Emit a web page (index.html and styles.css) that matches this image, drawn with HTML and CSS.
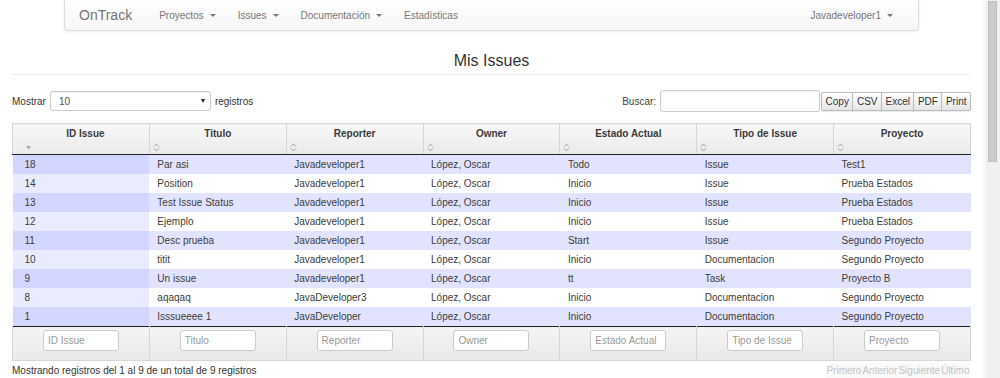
FILE: index.html
```html
<!DOCTYPE html>
<html lang="es">
<head>
<meta charset="utf-8">
<title>OnTrack - Mis Issues</title>
<link rel="stylesheet" href="styles.css">
</head>
<body>
<div class="page">
<nav class="navbar">
  <span class="brand">OnTrack</span>
  <ul class="nav">
    <li>Proyectos<span class="caret"></span></li>
    <li>Issues<span class="caret"></span></li>
    <li>Documentación<span class="caret"></span></li>
    <li>Estadísticas</li>
  </ul>
  <ul class="nav nav-right">
    <li>Javadeveloper1<span class="caret"></span></li>
  </ul>
</nav>

<main class="container">
  <h1 class="page-header">Mis Issues</h1>

  <div class="controls">
    <div class="length">
      <span>Mostrar</span>
      <div class="select"><span>10</span><span class="arrow"></span></div>
      <span>registros</span>
    </div>
    <div class="filter">
      <span>Buscar:</span>
      <input class="search" type="text">
      <div class="tools">
        <button>Copy</button><button>CSV</button><button>Excel</button><button>PDF</button><button>Print</button>
      </div>
    </div>
  </div>

  <table class="issues">
    <thead>
      <tr>
        <th class="first"><div class="th-title">ID Issue</div><div class="sort"><svg width="7" height="9" viewBox="0 0 7 9"><path d="M1.2 3.3 L5.8 3.3 L3.5 6.2 Z" fill="#999"/></svg></div></th>
        <th><div class="th-title">Titulo</div><div class="sort"><svg width="7" height="9" viewBox="0 0 7 9"><path d="M1 3.6 L3.5 1.1 L6 3.6 M1 5.4 L3.5 7.9 L6 5.4" fill="none" stroke="#9c9c9c" stroke-width="1"/></svg></div></th>
        <th><div class="th-title">Reporter</div><div class="sort"><svg width="7" height="9" viewBox="0 0 7 9"><path d="M1 3.6 L3.5 1.1 L6 3.6 M1 5.4 L3.5 7.9 L6 5.4" fill="none" stroke="#9c9c9c" stroke-width="1"/></svg></div></th>
        <th><div class="th-title">Owner</div><div class="sort"><svg width="7" height="9" viewBox="0 0 7 9"><path d="M1 3.6 L3.5 1.1 L6 3.6 M1 5.4 L3.5 7.9 L6 5.4" fill="none" stroke="#9c9c9c" stroke-width="1"/></svg></div></th>
        <th><div class="th-title">Estado Actual</div><div class="sort"><svg width="7" height="9" viewBox="0 0 7 9"><path d="M1 3.6 L3.5 1.1 L6 3.6 M1 5.4 L3.5 7.9 L6 5.4" fill="none" stroke="#9c9c9c" stroke-width="1"/></svg></div></th>
        <th><div class="th-title">Tipo de Issue</div><div class="sort"><svg width="7" height="9" viewBox="0 0 7 9"><path d="M1 3.6 L3.5 1.1 L6 3.6 M1 5.4 L3.5 7.9 L6 5.4" fill="none" stroke="#9c9c9c" stroke-width="1"/></svg></div></th>
        <th><div class="th-title">Proyecto</div><div class="sort"><svg width="7" height="9" viewBox="0 0 7 9"><path d="M1 3.6 L3.5 1.1 L6 3.6 M1 5.4 L3.5 7.9 L6 5.4" fill="none" stroke="#9c9c9c" stroke-width="1"/></svg></div></th>
      </tr>
    </thead>
    <tbody>
      <tr class="odd"><td>18</td><td>Par asi</td><td>Javadeveloper1</td><td>López, Oscar</td><td>Todo</td><td>Issue</td><td>Test1</td></tr>
      <tr class="even"><td>14</td><td>Position</td><td>Javadeveloper1</td><td>López, Oscar</td><td>Inicio</td><td>Issue</td><td>Prueba Estados</td></tr>
      <tr class="odd"><td>13</td><td>Test Issue Status</td><td>Javadeveloper1</td><td>López, Oscar</td><td>Inicio</td><td>Issue</td><td>Prueba Estados</td></tr>
      <tr class="even"><td>12</td><td>Ejemplo</td><td>Javadeveloper1</td><td>López, Oscar</td><td>Inicio</td><td>Issue</td><td>Prueba Estados</td></tr>
      <tr class="odd"><td>11</td><td>Desc prueba</td><td>Javadeveloper1</td><td>López, Oscar</td><td>Start</td><td>Issue</td><td>Segundo Proyecto</td></tr>
      <tr class="even"><td>10</td><td>titit</td><td>Javadeveloper1</td><td>López, Oscar</td><td>Inicio</td><td>Documentacion</td><td>Segundo Proyecto</td></tr>
      <tr class="odd"><td>9</td><td>Un issue</td><td>Javadeveloper1</td><td>López, Oscar</td><td>tt</td><td>Task</td><td>Proyecto B</td></tr>
      <tr class="even"><td>8</td><td>aqaqaq</td><td>JavaDeveloper3</td><td>López, Oscar</td><td>Inicio</td><td>Documentacion</td><td>Segundo Proyecto</td></tr>
      <tr class="odd"><td>1</td><td>Isssueeee 1</td><td>JavaDeveloper</td><td>López, Oscar</td><td>Inicio</td><td>Documentacion</td><td>Segundo Proyecto</td></tr>
    </tbody>
    <tfoot>
      <tr>
        <th><input class="col-filter" placeholder="ID Issue"></th>
        <th><input class="col-filter" placeholder="Titulo"></th>
        <th><input class="col-filter" placeholder="Reporter"></th>
        <th><input class="col-filter" placeholder="Owner"></th>
        <th><input class="col-filter" placeholder="Estado Actual"></th>
        <th><input class="col-filter" placeholder="Tipo de Issue"></th>
        <th><input class="col-filter" placeholder="Proyecto"></th>
      </tr>
    </tfoot>
  </table>

  <div class="info-row">
    <div class="info">Mostrando registros del 1 al 9 de un total de 9 registros</div>
    <div class="paginate"><span>Primero</span><span>Anterior</span><span>Siguiente</span><span>Último</span></div>
  </div>
</main>
</div>

<div class="scrollbar" aria-hidden="true"><div class="thumb"></div></div>
</body>
</html>
```

FILE: styles.css
```css
body {
  margin: 0;
  font-family: "Liberation Sans", Arial, sans-serif;
  font-size: 10px;
  color: #333;
  background: #fff;
}

.page {
  width: 983px;
}

/* Window scrollbar (page is scrolled to top) */
.scrollbar {
  position: fixed;
  top: 0;
  right: 0;
  width: 17px;
  height: 100%;
  background: linear-gradient(to right, #f7f7f7 0, #f7f7f7 3px, #f0f0f0 3px);
}
.thumb {
  box-sizing: border-box;
  margin: 1px 0 0 5px;
  width: 9px;
  height: 161px;
  background: #cbcbcb;
  border: 1px solid #bdbdbd;
}

/* Navbar */
.navbar {
  box-sizing: border-box;
  width: 855px;
  height: 31px;
  margin: 0 auto;
  padding: 0 14px;
  display: flex;
  align-items: center;
  background: linear-gradient(#ffffff, #f6f6f6);
  border: 1px solid #dcdcdc;
  border-top: 0;
  border-radius: 0 0 4px 4px;
  box-shadow: 0 1px 3px rgba(0, 0, 0, 0.07);
}
.brand {
  font-size: 14px;
  color: #777;
  margin-right: 16px;
}
.nav {
  list-style: none;
  margin: 0;
  padding: 0;
  display: flex;
  align-items: center;
}
.nav li {
  padding: 0 11px;
  color: #777;
  font-size: 10px;
  display: flex;
  align-items: center;
}
.nav-right {
  margin-left: auto;
}
.caret {
  display: inline-block;
  width: 0;
  height: 0;
  margin-left: 6px;
  border-top: 3px solid #777;
  border-left: 3px solid transparent;
  border-right: 3px solid transparent;
}

/* Container */
.container {
  padding: 0 12px;
}
.page-header {
  margin: 20px 0 0;
  padding-bottom: 3px;
  border-bottom: 1px solid #eee;
  font-size: 16px;
  line-height: 20px;
  font-weight: normal;
  text-align: center;
  color: #333;
}

/* Controls */
.controls {
  margin-top: 15px;
  display: flex;
  justify-content: space-between;
  align-items: center;
}
.length,
.filter {
  display: flex;
  align-items: center;
}
.select {
  box-sizing: border-box;
  width: 161px;
  height: 20px;
  margin: 0 4px;
  padding: 0 5px 0 8px;
  display: flex;
  align-items: center;
  justify-content: space-between;
  border: 1px solid #ccc;
  border-radius: 3px;
  background: #fff;
  color: #555;
  box-shadow: inset 0 1px 1px rgba(0, 0, 0, 0.05);
}
.arrow {
  width: 0;
  height: 0;
  border-top: 4px solid #222;
  border-left: 2.5px solid transparent;
  border-right: 2.5px solid transparent;
}
.filter > span {
  color: #444;
}
.search {
  box-sizing: border-box;
  width: 160px;
  height: 22px;
  margin: 0 1px 0 4px;
  border: 1px solid #ccc;
  border-radius: 3px;
  box-shadow: inset 0 1px 1px rgba(0, 0, 0, 0.05);
  font: inherit;
}
.tools {
  display: flex;
}
.tools button {
  height: 19px;
  padding: 0 3.5px;
  margin: 0 0 0 -1px;
  font-family: "Liberation Sans", Arial, sans-serif;
  font-size: 10px;
  color: #333;
  border: 1px solid #bcbcbc;
  background: linear-gradient(#ffffff, #e6e6e6);
  box-shadow: 0 1px 1px rgba(0, 0, 0, 0.08);
}
.tools button:first-child {
  margin-left: 0;
  border-radius: 2px 0 0 2px;
}
.tools button:last-child {
  border-radius: 0 2px 2px 0;
}

/* Table */
.issues {
  width: 100%;
  margin-top: 11px;
  border-collapse: collapse;
  table-layout: fixed;
}
.issues thead th {
  padding: 2px 3px 1px;
  border: 1px solid #d6d6d6;
  border-bottom: 1px solid #222;
  background: linear-gradient(#f8f8f8, #eaeaea);
  font-weight: bold;
  color: #3a3a3a;
  font-size: 10px;
  text-align: center;
}
.issues thead th.first {
  padding-left: 12px;
}
.th-title {
  line-height: 15px;
}
.sort {
  height: 12px;
  display: flex;
  align-items: center;
  justify-content: flex-start;
}
.sort svg {
  display: block;
}
.issues td {
  height: 19px;
  padding: 0 8px;
  line-height: 19px;
  white-space: nowrap;
  overflow: hidden;
  color: #3c3c3c;
}
.issues td:first-child {
  padding-left: 12px;
}
.odd td {
  background: #e2e4ff;
}
.odd td:first-child {
  background: #d3d6ff;
}
.even td {
  background: #fff;
}
.even td:first-child {
  background: #eaebff;
}
.issues tfoot th {
  padding: 3px 0 9px;
  border: 1px solid #d6d6d6;
  border-top: 1px solid #222;
  background: linear-gradient(#f4f4f4, #e9e9e9);
  text-align: center;
  font-weight: normal;
}
.col-filter {
  box-sizing: border-box;
  display: block;
  width: 76px;
  height: 21px;
  margin: 0 auto;
  padding: 0 4px;
  border: 1px solid #ccc;
  border-radius: 3px;
  background: #fff;
  font-family: "Liberation Sans", Arial, sans-serif;
  font-size: 10px;
}
.col-filter::placeholder {
  color: #999;
}

/* Info row */
.info-row {
  margin-top: 3px;
  display: flex;
  justify-content: space-between;
  align-items: center;
  line-height: 14px;
}
.info {
  color: #333;
}
.paginate {
  display: flex;
  margin-right: 1px;
  background: #f9f9f9;
}
.paginate span {
  padding: 0 0.5px;
  color: #c4c4c4;
}
```
